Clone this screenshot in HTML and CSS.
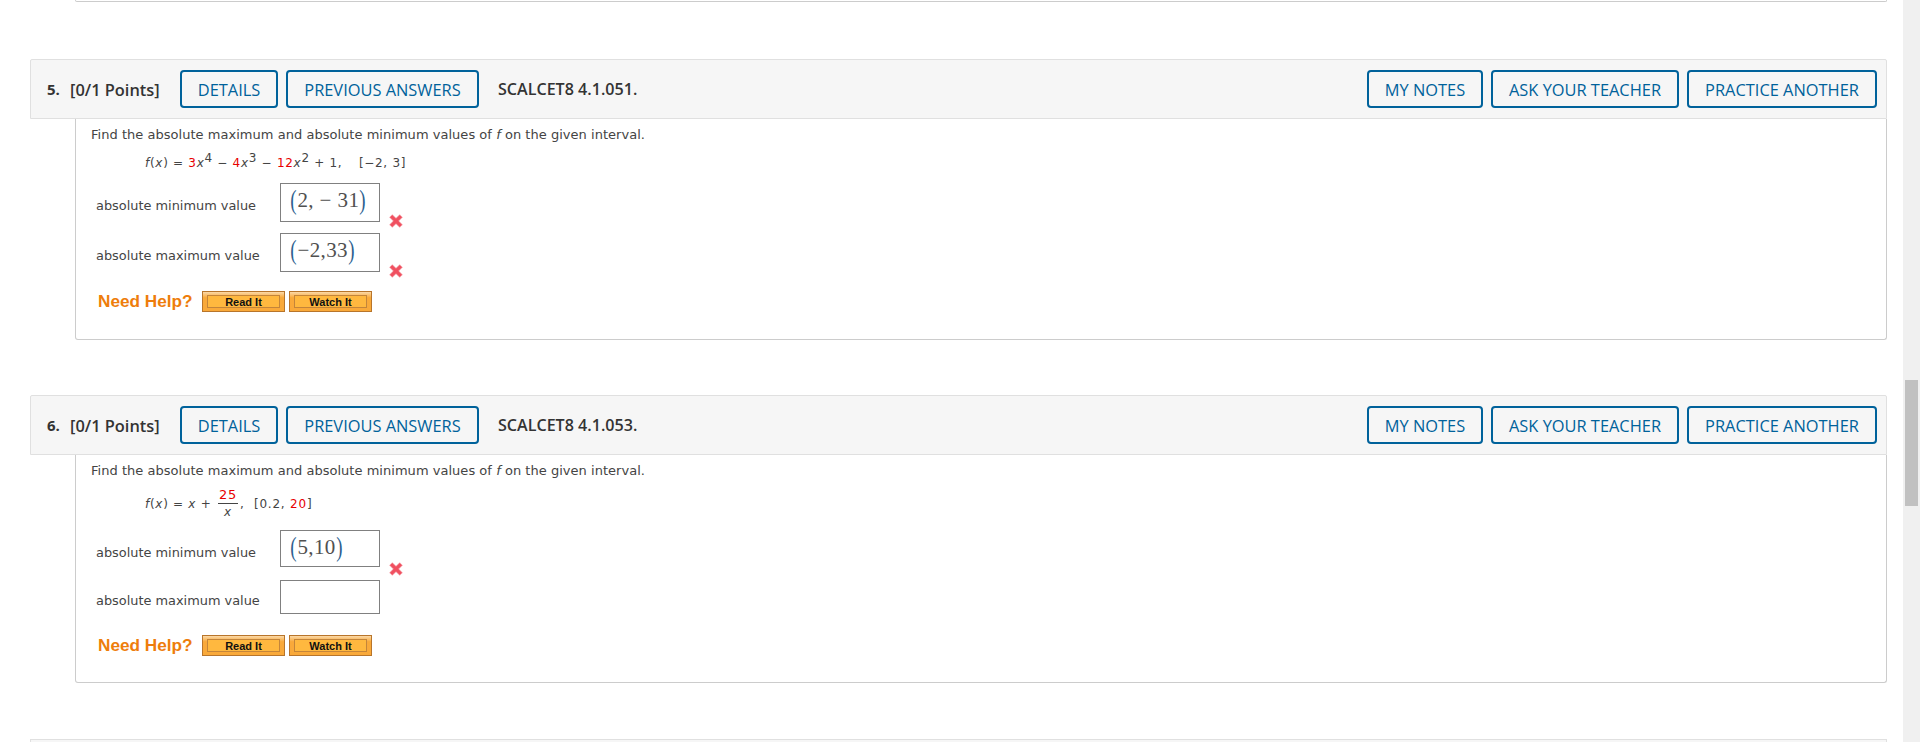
FILE: index.html
```html
<!DOCTYPE html>
<html lang="en">
<head>
    <meta charset="UTF-8">
    <title>Assignment</title>
    <link rel="stylesheet" href="styles.css">
</head>
<body>
    <div class="page">
        <main class="questions">
            <!-- Bottom of the previous question -->
            <div class="prev-end"></div>

            <!-- Question 5 -->
            <section class="question q5">
                <header class="q-head">
                    <span class="q-num">5.</span>
                    <span class="q-points">[0/1 Points]</span>
                    <a class="q-btn btn-details" href="#">DETAILS</a>
                    <a class="q-btn btn-previous" href="#">PREVIOUS ANSWERS</a>
                    <span class="q-code">SCALCET8 4.1.051.</span>
                    <span class="q-spacer"></span>
                    <a class="q-btn btn-notes" href="#">MY NOTES</a>
                    <a class="q-btn btn-ask" href="#">ASK YOUR TEACHER</a>
                    <a class="q-btn btn-practice" href="#">PRACTICE ANOTHER</a>
                </header>
                <div class="q-body">
                    <p class="prompt">Find the absolute maximum and absolute minimum values of <i>f</i> on the given interval.</p>
                    <p class="formula"><i>f</i>(<i>x</i>) = <b class="red">3</b><i>x</i><sup>4</sup> &minus; <b class="red">4</b><i>x</i><sup>3</sup> &minus; <b class="red">12</b><i>x</i><sup>2</sup> + 1, <span class="interval">[&minus;2, 3]</span></p>
                    <div class="answer">
                        <span class="answer-label">absolute minimum value</span>
                        <span class="answer-box"><span class="paren">(</span>2, &minus; 31<span class="paren">)</span></span>
                        <svg class="wrong" viewBox="0.4 0.4 13.2 13.2"><path d="M1 3.5 3.5 1 7 4.5 10.500 1 13 3.500 9.500 7 13 10.500 10.500 13 7 9.500 3.500 13 1 10.500 4.500 7Z"/></svg>
                    </div>
                    <div class="answer">
                        <span class="answer-label">absolute maximum value</span>
                        <span class="answer-box"><span class="paren">(</span>&minus;2,33<span class="paren">)</span></span>
                        <svg class="wrong" viewBox="0.4 0.4 13.2 13.2"><path d="M1 3.5 3.5 1 7 4.5 10.500 1 13 3.500 9.500 7 13 10.500 10.500 13 7 9.500 3.500 13 1 10.500 4.500 7Z"/></svg>
                    </div>
                    <div class="help">
                        <span class="help-label">Need Help?</span>
                        <a class="help-btn" href="#"><span>Read It</span></a>
                        <a class="help-btn" href="#"><span>Watch It</span></a>
                    </div>
                </div>
            </section>

            <!-- Question 6 -->
            <section class="question q6">
                <header class="q-head">
                    <span class="q-num">6.</span>
                    <span class="q-points">[0/1 Points]</span>
                    <a class="q-btn btn-details" href="#">DETAILS</a>
                    <a class="q-btn btn-previous" href="#">PREVIOUS ANSWERS</a>
                    <span class="q-code">SCALCET8 4.1.053.</span>
                    <span class="q-spacer"></span>
                    <a class="q-btn btn-notes" href="#">MY NOTES</a>
                    <a class="q-btn btn-ask" href="#">ASK YOUR TEACHER</a>
                    <a class="q-btn btn-practice" href="#">PRACTICE ANOTHER</a>
                </header>
                <div class="q-body">
                    <p class="prompt">Find the absolute maximum and absolute minimum values of <i>f</i> on the given interval.</p>
                    <div class="formula formula-frac">
                        <span><i>f</i>(<i>x</i>) = <i>x</i> + </span>
                        <span class="frac"><b class="red num">25</b><i class="den">x</i></span>
                        <span>, <span class="interval-short">[0.2, <b class="red">20</b>]</span></span>
                    </div>
                    <div class="answer answer-first">
                        <span class="answer-label">absolute minimum value</span>
                        <span class="answer-box"><span class="paren">(</span>5,10<span class="paren">)</span></span>
                        <svg class="wrong" viewBox="0.4 0.4 13.2 13.2"><path d="M1 3.5 3.5 1 7 4.5 10.500 1 13 3.500 9.500 7 13 10.500 10.500 13 7 9.500 3.500 13 1 10.500 4.500 7Z"/></svg>
                    </div>
                    <div class="answer answer-empty">
                        <span class="answer-label">absolute maximum value</span>
                        <span class="answer-box"></span>
                    </div>
                    <div class="help">
                        <span class="help-label">Need Help?</span>
                        <a class="help-btn" href="#"><span>Read It</span></a>
                        <a class="help-btn" href="#"><span>Watch It</span></a>
                    </div>
                </div>
            </section>

            <!-- Top of the next question -->
            <div class="next-start"></div>
        </main>

        <div class="scrollbar"><div class="scroll-thumb"></div></div>
    </div>
</body>
</html>
```

FILE: styles.css
```css
/* General */
html, body {
    margin: 0;
    padding: 0;
    height: 742px;
    overflow: hidden;
    background: #fff;
}

body {
    font-family: "DejaVu Sans", sans-serif;
    font-size: 12px;
    color: #444;
}

.page {
    display: flex;
    height: 742px;
}

.questions {
    flex: 1;
    min-width: 0;
    padding: 0 16px 0 30px;
    overflow: hidden;
}

.prev-end {
    height: 1px;
    margin-left: 45px;
    border: 1px solid #ccc;
    border-top: none;
    border-radius: 0 0 3px 3px;
}

/* Question header */
.question {
    margin-top: 57px;
}

.q6 {
    margin-top: 55px;
}

.q-head {
    display: flex;
    align-items: center;
    height: 58px;
    padding: 0 9px 0 16px;
    background: #f6f6f6;
    border: 1px solid #e0e0e0;
    border-radius: 2px 2px 0 0;
    font-family: "Open Sans", sans-serif;
    font-size: 16px;
    color: #333;
}

.q-num {
    width: 23px;
    font-weight: 700;
    font-size: 15px;
}

.q-points {
    width: 110px;
    font-weight: 600;
    font-size: 16.4px;
}

.q-code {
    margin-left: 19px;
    font-weight: 600;
    font-size: 16.1px;
}

.q-spacer {
    flex: 1;
}

.q-btn {
    box-sizing: border-box;
    display: flex;
    align-items: center;
    justify-content: center;
    height: 38px;
    border: 2px solid #00629b;
    border-radius: 4px;
    color: #00629b;
    font-size: 16.4px;
    text-decoration: none;
}

.btn-details { width: 98px; }
.btn-previous { width: 193px; margin-left: 8px; }
.btn-notes { width: 116px; }
.btn-ask { width: 188px; margin-left: 8px; }
.btn-practice { width: 190px; margin-left: 8px; }

/* Question body */
.q-body {
    box-sizing: border-box;
    height: 221px;
    margin-left: 45px;
    padding: 8px 15px 0;
    background: #fff;
    border: 1px solid #ccc;
    border-top: none;
    border-radius: 0 0 3px 3px;
}

.q6 .q-body {
    height: 228px;
}

.prompt {
    margin: 0;
    font-size: 13px;
    line-height: 16px;
    letter-spacing: 0.03px;
}

.formula {
    margin: 12px 0 0 54px;
    font-size: 12px;
    line-height: 16px;
    letter-spacing: 0.7px;
}

.formula sup {
    font-size: 12px;
    line-height: 0;
}

.red {
    color: #e80000;
    font-weight: normal;
}

.interval {
    margin-left: 12px;
}

.interval-short {
    margin-left: 5px;
    letter-spacing: 0.8px;
}

.formula-frac {
    display: flex;
    align-items: center;
    margin-top: 7px;
    white-space: pre;
}

.frac {
    display: flex;
    flex-direction: column;
    align-items: center;
    margin: 0 2px 0 2px;
    line-height: 17px;
}

.frac .num {
    padding: 0 1px;
    border-bottom: 1px solid #444;
    font-size: 13px;
}

.frac .den {
    line-height: 17px;
}

/* Answers */
.answer {
    display: flex;
    align-items: flex-start;
    height: 39px;
    margin: 11px 0 0 5px;
}

.q5 .formula + .answer {
    margin-top: 12px;
}

.answer-label {
    width: 184px;
    font-size: 12.9px;
    line-height: 45px;
}

.answer-box {
    box-sizing: border-box;
    width: 100px;
    height: 39px;
    padding: 1px 0 0 9px;
    border: 1px solid #808080;
    font-family: "Liberation Serif", serif;
    font-size: 21px;
    line-height: 30px;
    letter-spacing: 0.4px;
    color: #505050;
    background: #fff;
}

.paren {
    display: inline-block;
    color: #2d5f8f;
    transform: scale(0.9, 1.25);
}

.wrong {
    flex: none;
    width: 14px;
    height: 14px;
    margin: 31px 0 0 9px;
    fill: #f05060;
    stroke: #f5a0a8;
    stroke-width: 0.6;
}

.q6 .answer-first {
    height: 37px;
    margin-top: 9px;
}

.q6 .answer-first .answer-box {
    height: 37px;
}

.q6 .answer-first .answer-label {
    line-height: 45px;
}

.q6 .answer-first .wrong {
    margin-top: 32px;
}

.q6 .answer-empty {
    height: 34px;
    margin-top: 13px;
}

.q6 .answer-empty .answer-box {
    height: 34px;
}

.q6 .answer-empty .answer-label {
    line-height: 41px;
}

/* Need help */
.help {
    display: flex;
    align-items: center;
    margin: 19px 0 0 7px;
}

.q6 .help {
    margin-top: 21px;
}

.help-label {
    width: 104px;
    font-family: "Liberation Sans", sans-serif;
    font-size: 17.2px;
    font-weight: 700;
    color: #ee7d0b;
}

.help-btn {
    box-sizing: border-box;
    display: block;
    width: 83px;
    height: 21px;
    margin-right: 4px;
    padding: 3px 4px;
    background: linear-gradient(#fbd9a8, #f9a93a 30%);
    border: 1px solid #b8752b;
    text-decoration: none;
}

.help-btn span {
    box-sizing: border-box;
    display: block;
    height: 100%;
    border: 1px solid #c4853a;
    background: #ffb83f;
    font-family: "Liberation Sans", sans-serif;
    font-size: 11px;
    font-weight: 700;
    line-height: 13px;
    text-align: center;
    color: #111;
}

.next-start {
    height: 40px;
    margin-top: 56px;
    background: #f6f6f6;
    border: 1px solid #e0e0e0;
}

/* Scrollbar */
.scrollbar {
    flex: none;
    box-sizing: border-box;
    width: 17px;
    padding-top: 380px;
    background: #f0f0f0;
}

.scroll-thumb {
    width: 13px;
    height: 126px;
    margin-left: 2px;
    background: #c1c1c1;
}
```
